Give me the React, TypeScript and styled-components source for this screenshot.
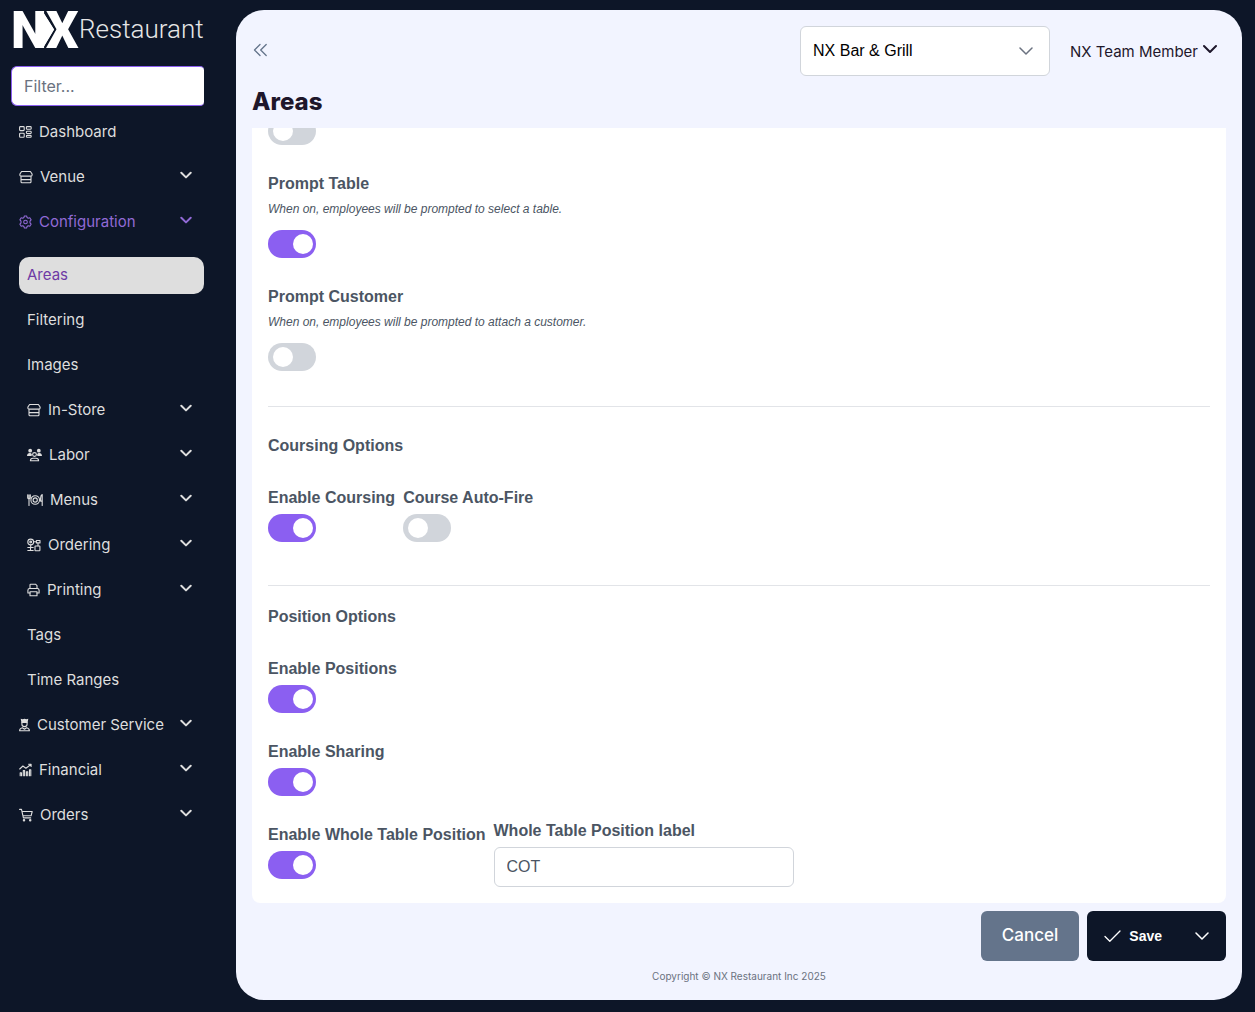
import React, { useState } from "react";
import styled, { createGlobalStyle } from "styled-components";

const ui = `Inter, "Open Sans", sans-serif`;
const body = `"Liberation Sans", Arial, sans-serif`;

const colors = {
  navy: "#0d1628",
  canvas: "#f2f4ff",
  violet: "#8b5ff1",
  slate: "#64748b",
  text: "#4b5563",
  line: "#d1d5db",
  ink: "#1e172b",
  nav: "#dedede",
};

const GlobalStyle = createGlobalStyle`
  *, *::before, *::after { box-sizing: border-box; }
  body { margin: 0; background: ${colors.navy}; font-family: ${body}; color: ${colors.text}; }
  button, input, select { font: inherit; color: inherit; }
`;

const Shell = styled.div`
  display: grid;
  grid-template-columns: 236px minmax(0, 1fr);
  height: 100vh;
`;

/* Sidebar */
const Sidebar = styled.aside`
  padding: 8px 32px 8px 11px;
  font-family: ${ui};
`;

const Brand = styled.a`
  display: flex;
  align-items: center;
  height: 44px;
  padding-left: 2px;
  color: #fff;
  text-decoration: none;
  white-space: nowrap;
`;

const BrandName = styled.span`
  height: 42px;
  color: #e6e6e6;
  font: 300 26px/40px Roboto, sans-serif;
`;

const FilterInput = styled.input`
  display: block;
  width: 100%;
  height: 40px;
  margin: 14px 0 8px;
  padding: 0 12px;
  border: 1px solid ${colors.violet};
  border-right: 0;
  border-radius: 6px 4px 4px 6px;
  background: #fff;
  color: ${colors.text};
  font-size: 16px;
  outline: none;
  &::placeholder { color: #6b7280; opacity: 1; }
`;

const NavList = styled.ul<{ $nested?: boolean }>`
  display: flex;
  flex-direction: column;
  gap: 8px;
  margin: 0;
  padding: ${(p) => (p.$nested ? "16px 0 0 8px" : "0")};
  list-style: none;
`;

const NavRow = styled.a<{ $tone?: "open" | "active" }>`
  display: flex;
  align-items: center;
  gap: 7px;
  height: 37px;
  padding: 0 12px 2px 8px;
  border-radius: 10px;
  background: ${(p) => (p.$tone === "active" ? colors.nav : "transparent")};
  color: ${(p) => (p.$tone === "active" ? "#6f3aa5" : p.$tone === "open" ? "#916ad6" : colors.nav)};
  font-size: 15px;
  font-weight: 400;
  line-height: 20px;
  text-decoration: none;
  white-space: nowrap;
`;

const NavText = styled.span`
  flex: 1;
`;

/* Main */
const Main = styled.main`
  display: flex;
  flex-direction: column;
  min-width: 0;
  min-height: 0;
  margin: 10px 13px 12px 0;
  padding: 16px;
  border-radius: 28px;
  background: ${colors.canvas};
`;

const TopBar = styled.header`
  display: flex;
  align-items: center;
  height: 50px;
  font-family: ${ui};
`;

const PlainButton = styled.button`
  display: flex;
  align-items: center;
  gap: 5px;
  padding: 0;
  border: 0;
  background: none;
  cursor: pointer;
`;

const CollapseButton = styled(PlainButton)`
  margin-right: auto;
  padding: 0 0 2px 1px;
  color: ${colors.slate};
`;

const VenuePicker = styled.div`
  display: grid;
  align-items: center;
  width: 250px;
  height: 50px;
  font-family: ${body};
  & > * { grid-area: 1 / 1; }
  & > svg { justify-self: end; margin-right: 17px; color: #6b7280; pointer-events: none; }
`;

const VenueSelect = styled.select`
  width: 100%;
  height: 100%;
  padding: 0 40px 2px 12px;
  appearance: none;
  border: 1px solid ${colors.line};
  border-radius: 6px;
  background: #fff;
  color: #000;
  font-size: 16px;
`;

const UserButton = styled(PlainButton)`
  margin-left: 20px;
  padding-right: 9px;
  color: ${colors.ink};
  font-size: 15px;
`;

const Title = styled.h1`
  margin: 8px 0;
  color: ${colors.ink};
  font: 800 24px/36px ${ui};
`;

/* Reversed column keeps the form scrolled to its last section. */
const FormPanel = styled.div`
  display: flex;
  flex: 1;
  flex-direction: column-reverse;
  min-height: 0;
  overflow-y: auto;
  scrollbar-width: none;
  border-radius: 0 0 8px 8px;
  background: #fff;
`;

const Form = styled.form`
  padding: 16px;
`;

const Section = styled.section<{ $top?: number; $bottom?: number }>`
  display: flex;
  flex-direction: column;
  gap: 13px;
  padding: ${(p) => p.$top ?? 0}px 0 ${(p) => p.$bottom ?? 0}px;
  & + & { border-top: 1px solid #e2e4e8; }
`;

const SectionTitle = styled.h2`
  margin: 0 0 9px;
  font-size: 16px;
  font-weight: 700;
  line-height: 24px;
`;

const FieldRow = styled.div`
  display: flex;
  align-items: flex-end;
  gap: 8px;
`;

const Field = styled.div<{ $toggle?: boolean }>`
  display: flex;
  flex-direction: column;
  align-items: flex-start;
  gap: 4px;
  padding: ${(p) => (p.$toggle ? "6px 0 8px" : "0")};
`;

const Label = styled.label`
  font-size: 16px;
  font-weight: 700;
  line-height: 24px;
`;

const Hint = styled.p`
  margin: 0;
  padding-bottom: 8px;
  font-size: 12px;
  font-style: italic;
  line-height: 18px;
`;

const Switch = styled.input`
  appearance: none;
  width: 48px;
  height: 28px;
  margin: 0;
  padding: 4px 5px;
  border-radius: 14px;
  background: ${colors.line};
  cursor: pointer;
  &::before {
    content: "";
    display: block;
    width: 20px;
    height: 20px;
    border-radius: 50%;
    background: #fff;
    transition: transform 0.2s;
  }
  &:checked { background: ${colors.violet}; }
  &:checked::before { transform: translateX(20px); }
`;

const TextInput = styled.input`
  width: 300px;
  height: 40px;
  padding: 0 12px;
  border: 1px solid ${colors.line};
  border-radius: 6px;
  background: #fff;
  font-size: 16px;
`;

const Actions = styled.div`
  display: flex;
  justify-content: flex-end;
  gap: 8px;
  padding-top: 8px;
`;

const CancelButton = styled.button`
  height: 50px;
  padding: 0 21px 2px;
  border: 0;
  border-radius: 6px;
  background: ${colors.slate};
  color: #fff;
  font-family: ${ui};
  font-size: 17px;
  font-weight: 500;
`;

const SplitButton = styled.div`
  display: flex;
  height: 50px;
  border-radius: 6px;
  background: ${colors.navy};
  color: #fff;
`;

const SaveButton = styled(PlainButton)`
  gap: 8px;
  padding: 0 16px 0 17px;
  font-size: 14px;
  font-weight: 700;
`;

const MoreButton = styled(PlainButton)`
  padding: 0 17px;
`;

const Copyright = styled.footer`
  padding-top: 8px;
  color: #6b7280;
  font: 400 10px/15px ${ui};
  text-align: center;
`;

/* Icons */
const Chevron = () => (
  <svg width="14" height="14" viewBox="0 0 14 14" fill="none" stroke="currentColor" strokeWidth="1.500" strokeLinecap="round" strokeLinejoin="round" aria-hidden="true">
    <path d="M1 4l6 6 6-6" />
  </svg>
);

const NavChevron = () => (
  <svg width="12" height="14" viewBox="0 0 12 14" fill="none" stroke="currentColor" strokeWidth="2" strokeLinecap="round" strokeLinejoin="round" aria-hidden="true">
    <path d="M1.3 2.800L6 7.400l4.700-4.600" />
  </svg>
);

type IconName =
  | "dashboard" | "store" | "gear" | "people" | "plate" | "flow"
  | "printer" | "agent" | "chart" | "cart";

const iconArt: Record<IconName, { width: number; art: React.ReactNode }> = {
  dashboard: {
    width: 13,
    art: (
      <>
        <rect x=".6" y="1.600" width="4.600" height="4" rx=".8" />
        <rect x="7.400" y="1.600" width="4.800" height="2.600" rx=".8" />
        <rect x=".6" y="8.200" width="4.600" height="4" rx=".8" />
        <rect x="7.400" y="6.300" width="4.800" height="2.200" rx=".8" />
        <rect x="7.400" y="10.400" width="4.800" height="1.900" rx=".8" />
      </>
    ),
  },
  store: {
    width: 14,
    art: (
      <>
        <path d="M2.600 1.500h8.800l1.700 2.500v1c0 .7-.6 1.100-1.300 1.100H2.200C1.500 6.100.9 5.700.9 5V4z" />
        <path d="M2 6.500v5.300c0 .6.4 1 1 1h8c.6 0 1-.4 1-1V6.500M2 9.600h10" />
      </>
    ),
  },
  gear: {
    width: 13,
    art: (
      <>
        <path d="M5.400 1h2.200l.5 1.600 1.100.6 1.600-.4 1.300 2-1.100 1.300v1.800l1.100 1.300-1.300 2-1.600-.4-1.100.6-.5 1.600H5.400l-.5-1.600-1.100-.6-1.600.4-1.300-2L2 7.900V6.100L.9 4.800l1.300-2 1.600.4 1.100-.6z" />
        <circle cx="6.500" cy="7" r="1.800" />
      </>
    ),
  },
  people: {
    width: 15,
    art: (
      <>
        <g fill="currentColor" stroke="none">
          <circle cx="3.200" cy="2.700" r="1.900" />
          <circle cx="11.800" cy="2.700" r="1.900" />
          <path d="M0 7.900c0-1.900 1.200-2.900 2.700-2.900 1.100 0 1.900.5 2.200 1.500L4.600 8H0zM15 7.900c0-1.900-1.200-2.900-2.700-2.900-1.100 0-1.900.5-2.200 1.500l.3 1.500H15z" />
        </g>
        <circle cx="7.500" cy="6.500" r="1.900" />
        <path d="M3.400 12.700c0-1.700 1.200-2.500 2.600-2.500h3c1.400 0 2.600.8 2.600 2.500z" />
      </>
    ),
  },
  plate: {
    width: 16,
    art: (
      <>
        <circle cx="8.200" cy="7" r="4.300" />
        <circle cx="8.200" cy="7" r="2.100" />
        <path d="M.7 1.700v3c0 .8.4 1.200 1.300 1.200s1.300-.4 1.300-1.200v-3M2 1.700v10.800M15.200 12.500v-11c-1 .6-1.600 2-1.600 3.700v2.900h1.600" />
      </>
    ),
  },
  flow: {
    width: 14,
    art: (
      <>
        <circle cx="3.700" cy="4" r="2.900" />
        <circle cx="3.700" cy="4" r=".9" />
        <path d="M7 3.700h2.200M9.400 2.500h3.600v2.400H9.400zM11 5.200v2.600M3.700 7.200v1.900M.8 9.500h5.400M.8 12.500h5.400M3.500 9.500v3" />
        <rect x="8" y="8" width="4.900" height="4.800" rx=".5" />
      </>
    ),
  },
  printer: {
    width: 13,
    art: (
      <>
        <path d="M3 5.400V1.900c0-.4.3-.7.7-.7h4.800L10 2.600v2.800" />
        <path d="M3 10H.9V7.300C.9 6.200 1.600 5.500 2.700 5.500h7.600c1.100 0 1.800.7 1.800 1.800V10H10" />
        <path d="M3 8.800h7v4H3z" />
      </>
    ),
  },
  agent: {
    width: 11,
    art: (
      <>
        <path d="M1.700.8l2 .5L5.500.7l1.800.6 2-.5-.8 4.100h-6z" fill="currentColor" stroke="none" />
        <path d="M2.900 4.500v1.800c0 1.300 1.100 2.300 2.600 2.300s2.600-1 2.600-2.300V4.500" />
        <path d="M.6 12.800c0-1.900 1-2.800 2.900-3.100l2 1.500 2-1.500c1.900.3 2.900 1.200 2.900 3.100z" />
      </>
    ),
  },
  chart: {
    width: 13,
    art: (
      <>
        <path d="M.7 6l3.200-3 3 2.200 5-3.700M9.600 1.200h2.500v2.200" />
        <path d="M1.200 12.700V9.800h1.300v2.900M4.300 12.700V7.600h1.300v5.100M7.400 12.700V8.700h1.300v4M10.500 12.700V6.800h1.300v5.900" />
      </>
    ),
  },
  cart: {
    width: 14,
    art: (
      <>
        <path d="M.6 1.400h1.900l1.900 8.500h7.300M3 3.500h10.200l-1.100 4.300H3.900" />
        <circle cx="5" cy="12.300" r=".7" />
        <circle cx="11.200" cy="12.300" r=".7" />
      </>
    ),
  },
};

const Icon = ({ name }: { name: IconName }) => {
  const { width, art } = iconArt[name];
  return (
    <svg width={width} height="14" viewBox={`0 0 ${width} 14`} fill="none" stroke="currentColor" strokeWidth="1.100" strokeLinecap="round" strokeLinejoin="round" aria-hidden="true">
      {art}
    </svg>
  );
};

const Monogram = () => (
  <svg width="66" height="38" viewBox="0 0 66 38" overflow="visible" aria-hidden="true" fill="#fff" fontFamily="Roboto, sans-serif" fontWeight="900" fontSize="51">
    <text x="33" y="37">X</text>
    <path d="M26 1h5L42 18.500 31 37h-5z" stroke={colors.navy} strokeWidth="1.500" />
    <path d="M25 1h5L41 18.500 30 37h-5z" />
    <text x="-2" y="37">N</text>
  </svg>
);

type Item = { label: string; icon?: IconName; tone?: "open" | "active"; expandable?: boolean; children?: Item[] };

const menu: Item[] = [
  { label: "Dashboard", icon: "dashboard" },
  { label: "Venue", icon: "store", expandable: true },
  {
    label: "Configuration",
    icon: "gear",
    tone: "open",
    expandable: true,
    children: [
      { label: "Areas", tone: "active" },
      { label: "Filtering" },
      { label: "Images" },
      { label: "In-Store", icon: "store", expandable: true },
      { label: "Labor", icon: "people", expandable: true },
      { label: "Menus", icon: "plate", expandable: true },
      { label: "Ordering", icon: "flow", expandable: true },
      { label: "Printing", icon: "printer", expandable: true },
      { label: "Tags" },
      { label: "Time Ranges" },
    ],
  },
  { label: "Customer Service", icon: "agent", expandable: true },
  { label: "Financial", icon: "chart", expandable: true },
  { label: "Orders", icon: "cart", expandable: true },
];

const Menu = ({ items, nested }: { items: Item[]; nested?: boolean }) => (
  <NavList $nested={nested}>
    {items.map((item) => (
      <li key={item.label}>
        <NavRow href="#" $tone={item.tone} aria-current={item.tone === "active" ? "page" : undefined}>
          {item.icon && <Icon name={item.icon} />}
          <NavText>{item.label}</NavText>
          {item.expandable && <NavChevron />}
        </NavRow>
        {item.children && <Menu items={item.children} nested />}
      </li>
    ))}
  </NavList>
);

const ToggleField = ({ id, label, hint, on = false }: { id: string; label: string; hint?: string; on?: boolean }) => {
  const [checked, setChecked] = useState(on);
  return (
    <Field $toggle>
      <Label htmlFor={id}>{label}</Label>
      {hint && <Hint>{hint}</Hint>}
      <Switch id={id} type="checkbox" role="switch" checked={checked} onChange={(e) => setChecked(e.target.checked)} />
    </Field>
  );
};

export default function App() {
  const [tableLabel, setTableLabel] = useState("COT");
  return (
    <>
      <GlobalStyle />
      <Shell>
        <Sidebar>
          <Brand href="#" aria-label="NX Restaurant">
            <Monogram />
            <BrandName>Restaurant</BrandName>
          </Brand>
          <FilterInput type="text" placeholder="Filter..." aria-label="Filter" />
          <nav>
            <Menu items={menu} />
          </nav>
        </Sidebar>
        <Main>
          <TopBar>
            <CollapseButton type="button" aria-label="Collapse menu">
              <svg width="15" height="14" viewBox="0 0 15 14" fill="none" stroke="currentColor" strokeWidth="1.300" strokeLinecap="round" strokeLinejoin="round" aria-hidden="true">
                <path d="M7 1.500L1.500 7 7 12.500M13.200 1.500L7.700 7l5.500 5.500" />
              </svg>
            </CollapseButton>
            <VenuePicker>
              <VenueSelect aria-label="Venue" defaultValue="NX Bar & Grill">
                <option>NX Bar &amp; Grill</option>
              </VenueSelect>
              <Chevron />
            </VenuePicker>
            <UserButton type="button">
              NX Team Member
              <svg width="14" height="16" viewBox="0 0 14 16" fill="none" stroke="currentColor" strokeWidth="2" strokeLinecap="round" strokeLinejoin="round" aria-hidden="true">
                <path d="M1 3l6 6 6-6" />
              </svg>
            </UserButton>
          </TopBar>
          <Title>Areas</Title>
          <FormPanel>
            <Form>
              <Section $bottom={27}>
                <Field $toggle>
                  <Switch type="checkbox" role="switch" aria-label="Prompt" />
                </Field>
                <ToggleField id="prompt-table" label="Prompt Table" hint="When on, employees will be prompted to select a table." on />
                <ToggleField id="prompt-customer" label="Prompt Customer" hint="When on, employees will be prompted to attach a customer." />
              </Section>
              <Section $top={27} $bottom={35}>
                <SectionTitle>Coursing Options</SectionTitle>
                <FieldRow>
                  <ToggleField id="coursing" label="Enable Coursing" on />
                  <ToggleField id="auto-fire" label="Course Auto-Fire" />
                </FieldRow>
              </Section>
              <Section $top={19}>
                <SectionTitle>Position Options</SectionTitle>
                <ToggleField id="positions" label="Enable Positions" on />
                <ToggleField id="sharing" label="Enable Sharing" on />
                <FieldRow>
                  <ToggleField id="whole-table" label="Enable Whole Table Position" on />
                  <Field>
                    <Label htmlFor="whole-table-label">Whole Table Position label</Label>
                    <TextInput id="whole-table-label" type="text" value={tableLabel} onChange={(e) => setTableLabel(e.target.value)} />
                  </Field>
                </FieldRow>
              </Section>
            </Form>
          </FormPanel>
          <Actions>
            <CancelButton type="button">Cancel</CancelButton>
            <SplitButton>
              <SaveButton type="button">
                <svg width="17" height="14" viewBox="0 0 17 14" fill="none" stroke="currentColor" strokeWidth="1.300" strokeLinecap="round" strokeLinejoin="round" aria-hidden="true">
                  <path d="M1 7.500l4.800 4.800L16 2" />
                </svg>
                Save
              </SaveButton>
              <MoreButton type="button" aria-label="More save options">
                <Chevron />
              </MoreButton>
            </SplitButton>
          </Actions>
          <Copyright>Copyright © NX Restaurant Inc 2025</Copyright>
        </Main>
      </Shell>
    </>
  );
}
